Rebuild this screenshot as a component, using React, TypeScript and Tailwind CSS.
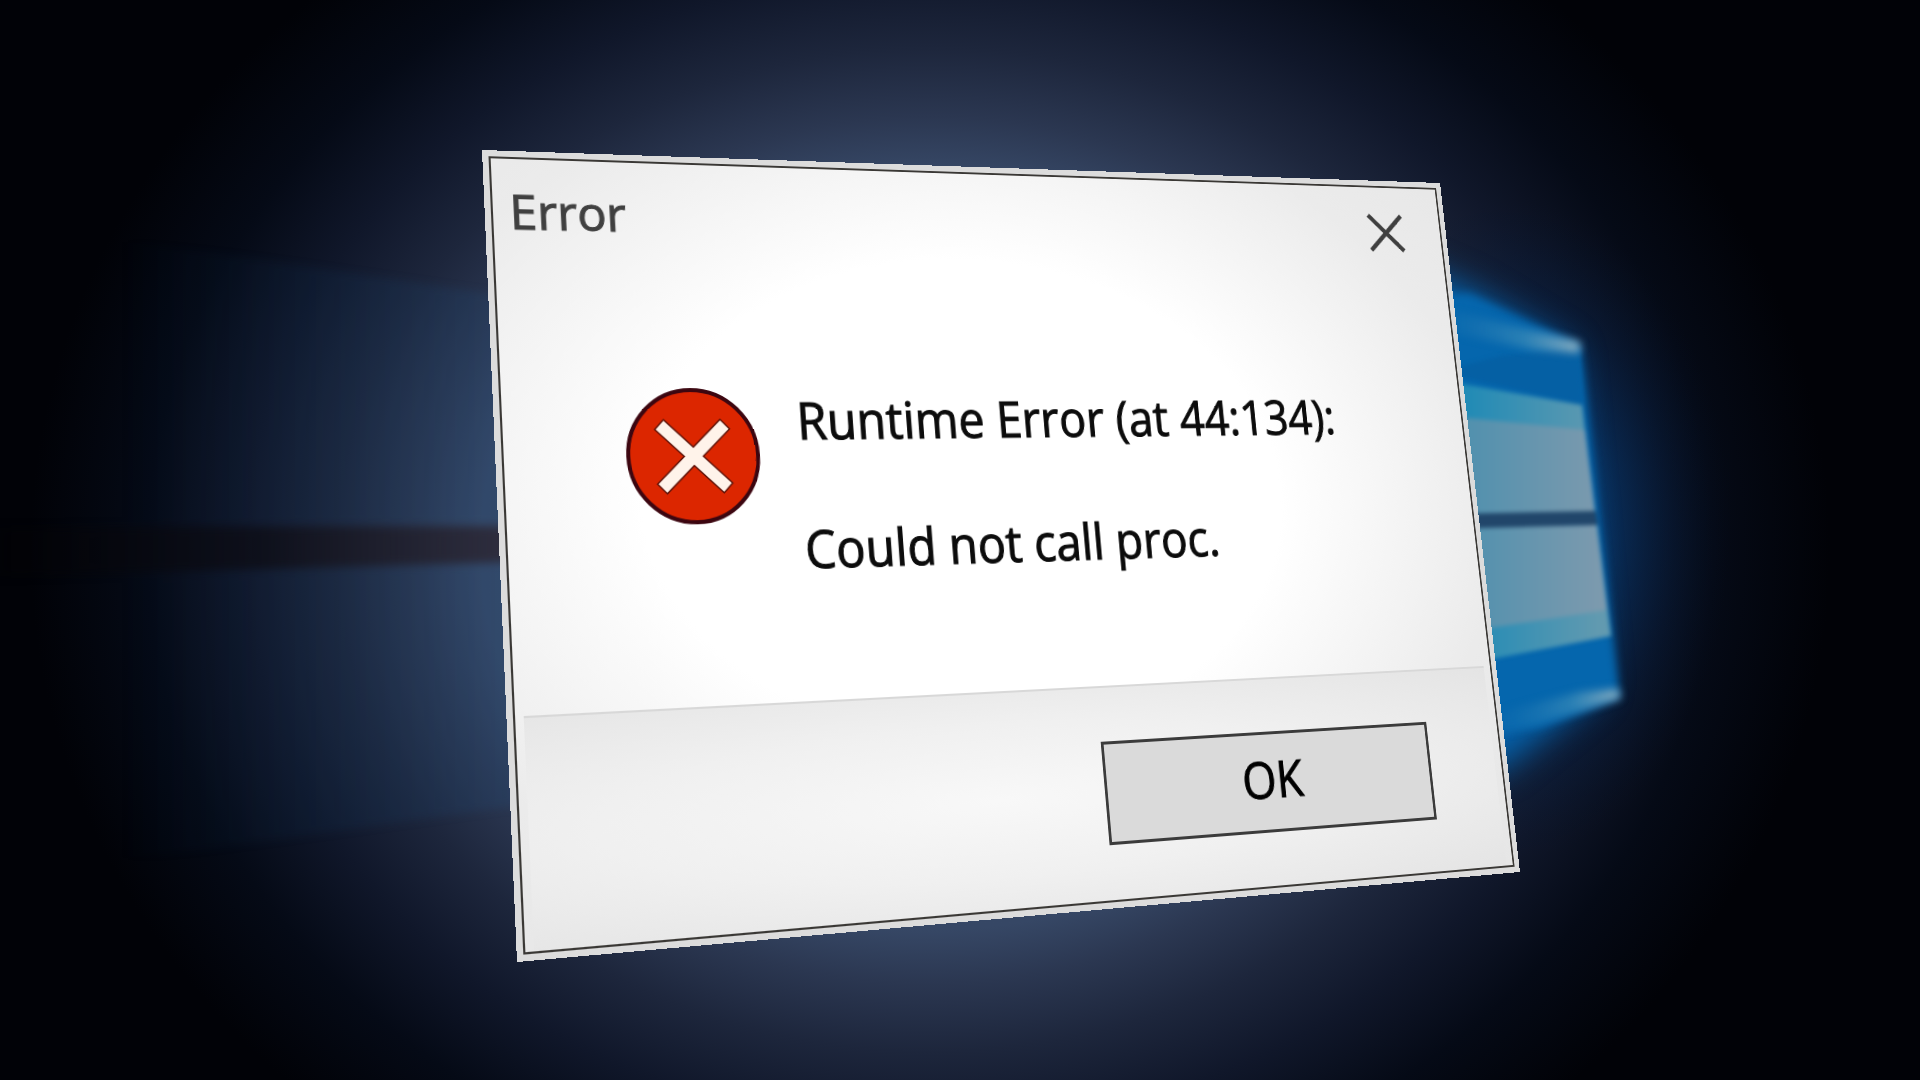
import type { ReactNode } from "react";

const FONT = "font-['Open_Sans','Noto_Sans',sans-serif]";

function Wallpaper() {
  return (
    <svg
      aria-hidden="true"
      className="absolute inset-0 h-full w-full"
      viewBox="0 0 1920 1080"
      preserveAspectRatio="xMidYMid slice"
    >
      <defs>
        <radialGradient id="room" gradientUnits="userSpaceOnUse" cx="0" cy="0" r="1" gradientTransform="translate(930 550) scale(900 760)">
          <stop offset="0" stopColor="#3a4d6e" />
          <stop offset="0.5" stopColor="#364765" />
          <stop offset="0.57" stopColor="#2b3751" />
          <stop offset="0.66" stopColor="#1d263c" />
          <stop offset="0.76" stopColor="#10172a" />
          <stop offset="0.87" stopColor="#050a16" />
          <stop offset="1" stopColor="#010207" />
        </radialGradient>
        <linearGradient id="beam" gradientUnits="userSpaceOnUse" x1="120" x2="520" y1="0" y2="0">
          <stop offset="0" stopColor="#0f3358" stopOpacity="0" />
          <stop offset="0.5" stopColor="#123a60" stopOpacity="0.15" />
          <stop offset="1" stopColor="#245182" stopOpacity="0.22" />
        </linearGradient>
        <linearGradient id="gap" gradientUnits="userSpaceOnUse" x1="0" x2="520" y1="0" y2="0">
          <stop offset="0" stopColor="#020205" stopOpacity="0.6" />
          <stop offset="0.5" stopColor="#0d0e17" stopOpacity="0.8" />
          <stop offset="1" stopColor="#302f40" />
        </linearGradient>
        <radialGradient id="halo">
          <stop offset="0" stopColor="#04509a" stopOpacity="0.9" />
          <stop offset="0.45" stopColor="#033c78" stopOpacity="0.6" />
          <stop offset="0.75" stopColor="#022450" stopOpacity="0.25" />
          <stop offset="1" stopColor="#011430" stopOpacity="0" />
        </radialGradient>
        <linearGradient id="pane" gradientUnits="userSpaceOnUse" x1="1460" x2="1600" y1="0" y2="0">
          <stop offset="0" stopColor="#4f90ae" />
          <stop offset="1" stopColor="#7c9aae" />
        </linearGradient>
        <linearGradient id="teal" gradientUnits="userSpaceOnUse" x1="1460" x2="1600" y1="0" y2="0">
          <stop offset="0" stopColor="#1e8ab6" />
          <stop offset="1" stopColor="#629ab0" />
        </linearGradient>
        <linearGradient id="shine" x1="0" x2="1" y1="0" y2="0">
          <stop offset="0" stopColor="#1f78b4" stopOpacity="0.1" />
          <stop offset="0.6" stopColor="#3a8bb8" stopOpacity="0.7" />
          <stop offset="1" stopColor="#8fb0c0" />
        </linearGradient>
        <filter id="soft2" x="-20%" y="-20%" width="140%" height="140%" colorInterpolationFilters="sRGB">
          <feGaussianBlur stdDeviation="2" />
        </filter>
        <filter id="soft4" x="-30%" y="-60%" width="160%" height="220%" colorInterpolationFilters="sRGB">
          <feGaussianBlur stdDeviation="4" />
        </filter>
        <filter id="soft16" x="-40%" y="-40%" width="180%" height="180%" colorInterpolationFilters="sRGB">
          <feGaussianBlur stdDeviation="16" />
        </filter>
      </defs>

      <rect width="1920" height="1080" fill="url(#room)" />

      {/* light beams on the left */}
      <g filter="url(#soft4)">
        <path d="M0 225 L250 258 L560 304 V524 H0Z" fill="url(#beam)" />
        <path d="M0 577 L560 560 V800 L200 850 L0 872Z" fill="url(#beam)" />
        <path d="M0 528 L560 526 V561 L0 576Z" fill="url(#gap)" />
      </g>

      {/* glow round the window */}
      <ellipse cx="1510" cy="530" rx="220" ry="330" fill="url(#halo)" />
      <path d="M1380 250 L1470 290 L1570 350 L1600 690 L1500 770 L1400 790Z" fill="#0560a8" filter="url(#soft16)" />

      {/* lit window panes */}
      <path d="M1400 296 L1470 294 L1580 345 L1620 698 L1540 728 L1400 740Z" fill="#0566ad" filter="url(#soft4)" />
      <g filter="url(#soft2)">
        <path d="M1440 372 L1500 356 L1579 348 L1583 405Z" fill="#0560a4" />
        <path d="M1400 373 L1582 405 L1595 516 H1400Z" fill="url(#teal)" />
        <path d="M1400 411 L1585 430 L1595 511 L1400 516Z" fill="url(#pane)" />
        <path d="M1400 528 L1597 525 L1611 636 L1400 677Z" fill="url(#teal)" />
        <path d="M1400 528 L1597 525 L1607 610 L1400 642Z" fill="url(#pane)" />
        <path d="M1400 515 L1596 511 L1598 525 L1400 530Z" fill="#21466a" />
      </g>
      <g filter="url(#soft4)">
        <path d="M1440 308 L1530 330 L1580 342 L1579 353 L1530 349 L1440 330Z" fill="url(#shine)" />
        <path d="M1500 712 L1580 692 L1618 689 L1620 698 L1570 714 L1500 735Z" fill="url(#shine)" />
      </g>
    </svg>
  );
}

function ErrorIcon() {
  return (
    <svg aria-hidden="true" viewBox="0 0 136 136" className="mt-1 h-[134px] w-[134px] shrink-0">
      <circle cx="68" cy="68" r="66" fill="#dc2600" stroke="#3c0610" strokeWidth="4" />
      <path d="M34 36 L102 101 M102 36 L34 101" stroke="#5f1208" strokeWidth="15" />
      <path d="M35 37 L101 100 M101 37 L35 100" stroke="#fff3ea" strokeWidth="12" />
    </svg>
  );
}

function CloseIcon() {
  return (
    <svg aria-hidden="true" viewBox="0 0 48 48" className="h-12 w-12">
      <path d="M3 4 L45 44 M45 4 L3 44" stroke="#3f3f3f" strokeWidth="5" fill="none" />
    </svg>
  );
}

function Dialog({ title, children }: { title: string; children: ReactNode }) {
  return (
    <section
      role="alertdialog"
      aria-labelledby="dialog-title"
      aria-describedby="dialog-message"
      className="w-[1080px] shrink-0 origin-top-left bg-[#dcdcdc] p-[6px] [transform:matrix3d(1.04843,0.034509,0,0.00015822,0.038388,1.00127,0,-0.000076564,0,0,1,0,62,-8,0,1)]"
    >
      <div className="border-2 border-[#3a3835] bg-[radial-gradient(ellipse_at_45%_45%,#ffffff_0%,#ffffff_42%,#ebebeb_75%,#e6e6e6_100%)]">
        <header className="flex items-center justify-between pt-5 pr-[46px] pl-4">
          <h1 id="dialog-title" className="text-[48px] leading-[64px] text-[#404040] [-webkit-text-stroke:1px]">
            {title}
          </h1>
          <button type="button" aria-label="Close">
            <CloseIcon />
          </button>
        </header>
        {children}
      </div>
    </section>
  );
}

export default function App() {
  return (
    <main
      className={`relative flex min-h-screen items-center justify-center overflow-hidden bg-[#010206] ${FONT}`}
    >
      <Wallpaper />
      <Dialog title="Error">
        <div className="flex min-h-[451px] gap-10 pt-[138px] pl-[118px]">
          <ErrorIcon />
          <div
            id="dialog-message"
            className="grid content-start gap-16 pt-1 text-[51px] leading-[64px] text-[#0c0c0c] [-webkit-text-stroke:1px]"
          >
            <p>Runtime Error (at 44:134):</p>
            <p>Could not call proc.</p>
          </div>
        </div>
        <footer className="mx-2 flex justify-end border-t-2 border-[#d8d8d8] bg-[radial-gradient(ellipse_at_45%_50%,#f8f8f8_0%,#f0f0f0_50%,#e4e4e4_100%)] pt-[54px] pr-20 pb-[54px]">
          <button
            type="button"
            className="h-[103px] w-[384px] border-3 border-[#3b3b3b] bg-[#dadada] pb-2 text-[51px] leading-[64px] text-black [-webkit-text-stroke:1px]"
          >
            OK
          </button>
        </footer>
      </Dialog>
    </main>
  );
}
